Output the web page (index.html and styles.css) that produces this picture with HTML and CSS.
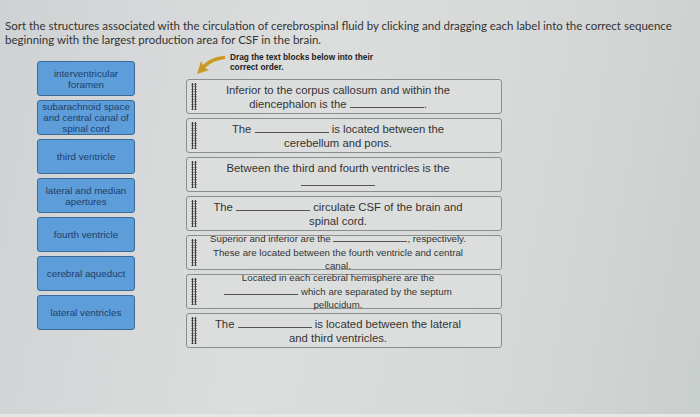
FILE: index.html
```html
<!DOCTYPE html>
<html lang="en">
<head>
    <meta charset="UTF-8">
    <meta name="viewport" content="width=device-width, initial-scale=1.0">
    <title>CSF Circulation - Sequence</title>
    <link rel="stylesheet" href="styles.css">
</head>
<body>
    <div class="page">
        <p class="prompt">Sort the structures associated with the circulation of cerebrospinal fluid by clicking and dragging each label into the correct sequence beginning with the largest production area for CSF in the brain.</p>

        <div class="board">
            <!-- labels to drag -->
            <div class="labels">
                <div class="label">interventricular<br>foramen</div>
                <div class="label">subarachnoid space<br>and central canal of<br>spinal cord</div>
                <div class="label">third ventricle</div>
                <div class="label">lateral and median<br>apertures</div>
                <div class="label">fourth ventricle</div>
                <div class="label">cerebral aqueduct</div>
                <div class="label">lateral ventricles</div>
            </div>

            <!-- sortable sentences -->
            <div class="slots">
                <div class="hint">
                    <svg class="hint-arrow" width="30" height="20" viewBox="0 0 30 20">
                        <path d="M29 1 C20 1 12 5 7 10 L5 6 L1 19 L13 15 L9 13 C14 8 21 5 29 4 Z" fill="#c99a22"/>
                    </svg>
                    <span>Drag the text blocks below into their<br>correct order.</span>
                </div>

                <div class="slot">
                    <div class="grip"></div>
                    <div class="slot-text">Inferior to the corpus callosum and within the<br>diencephalon is the <span class="blank"></span>.</div>
                </div>
                <div class="slot">
                    <div class="grip"></div>
                    <div class="slot-text">The <span class="blank"></span> is located between the<br>cerebellum and pons.</div>
                </div>
                <div class="slot">
                    <div class="grip"></div>
                    <div class="slot-text">Between the third and fourth ventricles is the<br><span class="blank"></span></div>
                </div>
                <div class="slot">
                    <div class="grip"></div>
                    <div class="slot-text">The <span class="blank"></span> circulate CSF of the brain and<br>spinal cord.</div>
                </div>
                <div class="slot">
                    <div class="grip"></div>
                    <div class="slot-text small">Superior and inferior are the <span class="blank"></span>, respectively.<br>These are located between the fourth ventricle and central<br>canal.</div>
                </div>
                <div class="slot">
                    <div class="grip"></div>
                    <div class="slot-text small">Located in each cerebral hemisphere are the<br><span class="blank"></span> which are separated by the septum<br>pellucidum.</div>
                </div>
                <div class="slot">
                    <div class="grip"></div>
                    <div class="slot-text">The <span class="blank"></span> is located between the lateral<br>and third ventricles.</div>
                </div>
            </div>
        </div>
    </div>
</body>
</html>
```

FILE: styles.css
```css
html, body {
    margin: 0;
    height: 100%;
}
body {
    background: linear-gradient(100deg, #cfd2d4 0%, #dcdddd 40%, #d7d9d8 70%, #c9cfcd 100%);
    color: #333;
    font-family: "Liberation Sans", Arial, sans-serif;
    overflow: hidden;
}
.page {
    height: 414px;
    border-bottom: 3px solid #e6e7e7;
}
.prompt {
    margin: 0;
    padding: 19px 20px 0 5px;
    font-family: Lato, "Open Sans", sans-serif;
    font-size: 11.5px;
    line-height: 14px;
    color: #333;
}
.board {
    display: flex;
    margin-top: 5px;
}
.labels {
    display: flex;
    flex-direction: column;
    gap: 4px;
    width: 98px;
    margin-left: 37px;
    padding-top: 9px;
}
.label {
    height: 33px;
    display: flex;
    align-items: center;
    justify-content: center;
    text-align: center;
    background: #5d9dda;
    border: 1px solid #3c6b9a;
    border-radius: 3px;
    color: #203f66;
    font-size: 9.8px;
    line-height: 11px;
}
.slots {
    display: flex;
    flex-direction: column;
    gap: 4px;
    width: 316px;
    margin-left: 51px;
}
.hint {
    display: flex;
    align-items: flex-start;
    height: 22px;
    margin-bottom: 1px;
    gap: 4px;
}
.hint-arrow {
    margin-left: 10px;
    margin-top: 3px;
    flex-shrink: 0;
}
.hint span {
    font-size: 8.3px;
    font-weight: bold;
    line-height: 10px;
    color: #222;
}
.slot {
    height: 33px;
    display: flex;
    align-items: center;
    background: #dcdede;
    border: 1px solid #8c8e8e;
    border-radius: 3px;
}
.grip {
    width: 6px;
    height: 27px;
    margin-left: 4px;
    background-image: radial-gradient(circle, #3e3e3e 0.9px, transparent 1.2px);
    background-size: 3px 2.5px;
    flex-shrink: 0;
}
.slot-text {
    flex: 1;
    padding: 0 32px 0 10px;
    text-align: center;
    font-size: 11.3px;
    line-height: 14px;
    color: #333;
}
.slot-text.small {
    font-size: 9.7px;
    line-height: 13.5px;
}
.blank {
    display: inline-block;
    width: 74px;
    border-bottom: 1px solid #555;
    vertical-align: baseline;
}
```
